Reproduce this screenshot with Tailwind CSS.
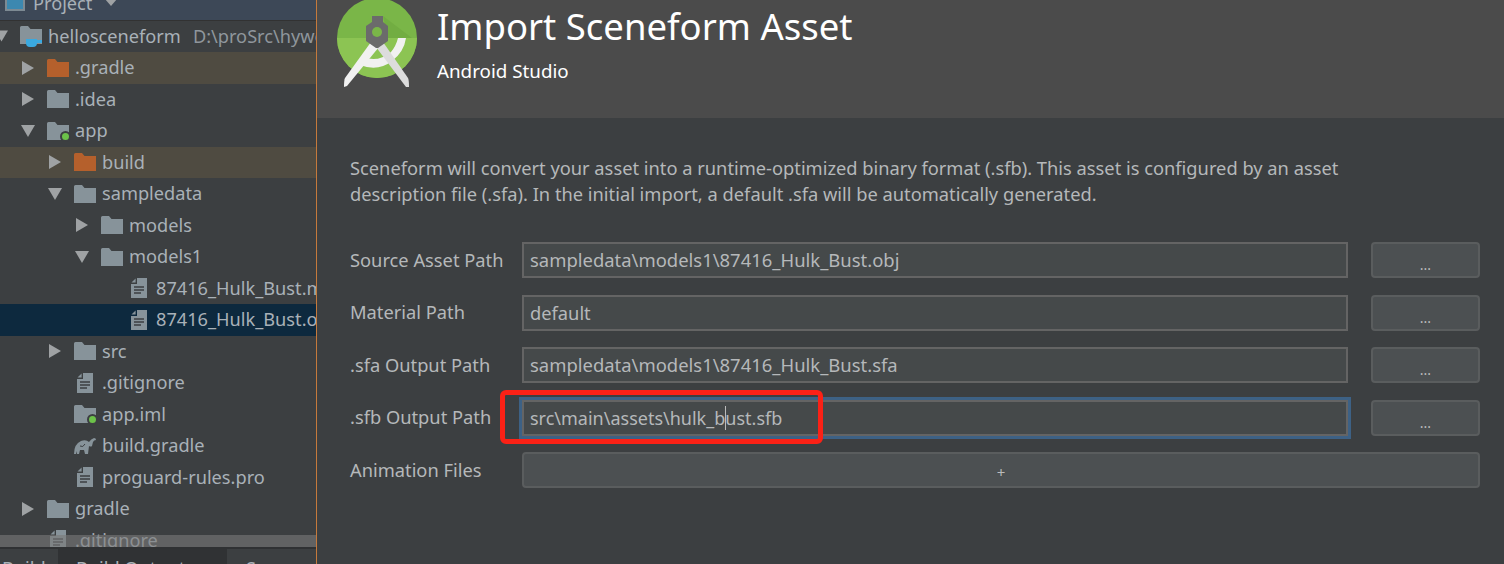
<!DOCTYPE html>
<html lang="en">
<head>
    <meta charset="UTF-8">
    <title>Import Sceneform Asset</title>
    <script src="https://cdn.jsdelivr.net/npm/@tailwindcss/browser@4"></script>
</head>
<body class="bg-[#3c3f41] overflow-hidden">
    <svg class="hidden">
        <symbol id="folder" viewBox="0 0 22 18"><path d="M0 1.5 Q0 0 1.5 0 H8 L10.5 3 H22 V18 H0 Z"/></symbol>
        <symbol id="file" viewBox="0 0 16 20">
            <path d="M6 0 H16 V20 H0 V6 H6 Z" fill="#87939a"/>
            <path d="M4.6 0.5 V4.6 H0.5 Z" fill="#87939a"/>
            <path d="M3 9 H13 M3 12 H13 M3 15 H10" stroke="#3c3f41" stroke-width="1.4" fill="none"/>
        </symbol>
        <symbol id="arrow-right" viewBox="0 0 12 14"><path d="M0 0 L12 7 L0 14 Z" fill="#9fa2a4"/></symbol>
        <symbol id="arrow-down" viewBox="0 0 14 12"><path d="M0 0 H14 L7 12 Z" fill="#9fa2a4"/></symbol>
    </svg>

    <div class="flex h-[564px] w-[1504px] font-['Noto_Sans','Open_Sans',sans-serif]">
        <!-- Project tree -->
        <aside class="relative w-[317px] shrink-0 border-r border-[#c57a3c] bg-[#3c3f41] text-[18.2px] text-[#a9b1b8] overflow-hidden">
            <div class="h-[20.5px] border-b border-[#323232] bg-[#3d4857] flex items-start overflow-hidden">
                <div class="ml-[5px] -mt-[9px] h-[20px] w-[20px] shrink-0 border-2 border-[#7d8a93] bg-[#3c88b0]"></div>
                <span class="ml-[8px] -mt-[10px] text-[#a9b1b8] leading-[26px]">Project</span>
                <svg class="ml-[13px] -mt-[1px] w-[12px] h-[7px]" viewBox="0 0 12 7"><path d="M0 0 H12 L6 7 Z" fill="#9fa2a4"/></svg>
            </div>

            <div class="flex h-[31.5px] items-center whitespace-nowrap -ml-[5px]">
                <svg class="w-[13px] h-[12px] mr-[12px] shrink-0"><use href="#arrow-down"/></svg>
                <span class="relative w-[22px] h-[20px] mr-[6px] shrink-0">
                    <svg class="w-[22px] h-[18px] fill-[#87939a]"><use href="#folder"/></svg>
                    <svg class="absolute left-[6px] top-[12px] w-[17px] h-[9px]" viewBox="0 0 17 9"><path d="M0 1 H11 V5 Q11 9 7 9 H4 Q0 9 0 5 Z M11 2 H16 V5 H11" fill="#3aa9e0"/></svg>
                </span>
                <span>hellosceneform</span><span class="ml-[12px] text-[#8f969c]">D:\proSrc\hywork\helloscene</span>
            </div>

            <div class="flex h-[31.5px] items-center whitespace-nowrap pl-[22px] bg-[#4f4b41]">
                <svg class="w-[12px] h-[14px] mr-[13px] shrink-0"><use href="#arrow-right"/></svg>
                <svg class="w-[22px] h-[18px] mr-[6px] shrink-0 fill-[#b5602c]"><use href="#folder"/></svg>
                <span>.gradle</span>
            </div>
            <div class="flex h-[31.5px] items-center whitespace-nowrap pl-[22px]">
                <svg class="w-[12px] h-[14px] mr-[13px] shrink-0"><use href="#arrow-right"/></svg>
                <svg class="w-[22px] h-[18px] mr-[6px] shrink-0 fill-[#87939a]"><use href="#folder"/></svg>
                <span>.idea</span>
            </div>
            <div class="flex h-[31.5px] items-center whitespace-nowrap pl-[21px]">
                <svg class="w-[14px] h-[12px] mr-[12px] shrink-0"><use href="#arrow-down"/></svg>
                <span class="relative w-[22px] h-[18px] mr-[6px] shrink-0">
                    <svg class="w-[22px] h-[18px] fill-[#87939a]"><use href="#folder"/></svg>
                    <span class="absolute left-[13px] top-[9px] h-[11px] w-[11px] rounded-full border-2 border-[#3c3f41] bg-[#6cc24a]"></span>
                </span>
                <span>app</span>
            </div>
            <div class="flex h-[31.5px] items-center whitespace-nowrap pl-[49px] bg-[#4f4b41]">
                <svg class="w-[12px] h-[14px] mr-[13px] shrink-0"><use href="#arrow-right"/></svg>
                <svg class="w-[22px] h-[18px] mr-[6px] shrink-0 fill-[#b5602c]"><use href="#folder"/></svg>
                <span>build</span>
            </div>
            <div class="flex h-[31.5px] items-center whitespace-nowrap pl-[48px]">
                <svg class="w-[14px] h-[12px] mr-[12px] shrink-0"><use href="#arrow-down"/></svg>
                <svg class="w-[22px] h-[18px] mr-[6px] shrink-0 fill-[#87939a]"><use href="#folder"/></svg>
                <span>sampledata</span>
            </div>
            <div class="flex h-[31.5px] items-center whitespace-nowrap pl-[76px]">
                <svg class="w-[12px] h-[14px] mr-[13px] shrink-0"><use href="#arrow-right"/></svg>
                <svg class="w-[22px] h-[18px] mr-[6px] shrink-0 fill-[#87939a]"><use href="#folder"/></svg>
                <span>models</span>
            </div>
            <div class="flex h-[31.5px] items-center whitespace-nowrap pl-[75px]">
                <svg class="w-[14px] h-[12px] mr-[12px] shrink-0"><use href="#arrow-down"/></svg>
                <svg class="w-[22px] h-[18px] mr-[6px] shrink-0 fill-[#87939a]"><use href="#folder"/></svg>
                <span>models1</span>
            </div>
            <div class="flex h-[31.5px] items-center whitespace-nowrap pl-[131px]">
                <svg class="w-[16px] h-[20px] mr-[9px] shrink-0"><use href="#file"/></svg>
                <span>87416_Hulk_Bust.mtl</span>
            </div>
            <div class="flex h-[31.5px] items-center whitespace-nowrap pl-[131px] bg-[#0d293e]">
                <svg class="w-[16px] h-[20px] mr-[9px] shrink-0"><use href="#file"/></svg>
                <span>87416_Hulk_Bust.obj</span>
            </div>
            <div class="flex h-[31.5px] items-center whitespace-nowrap pl-[49px]">
                <svg class="w-[12px] h-[14px] mr-[13px] shrink-0"><use href="#arrow-right"/></svg>
                <svg class="w-[22px] h-[18px] mr-[6px] shrink-0 fill-[#87939a]"><use href="#folder"/></svg>
                <span>src</span>
            </div>
            <div class="flex h-[31.5px] items-center whitespace-nowrap pl-[77px]">
                <svg class="w-[16px] h-[20px] mr-[9px] shrink-0"><use href="#file"/></svg>
                <span>.gitignore</span>
            </div>
            <div class="flex h-[31.5px] items-center whitespace-nowrap pl-[74px]">
                <span class="relative w-[22px] h-[18px] mr-[6px] shrink-0">
                    <svg class="w-[22px] h-[18px] fill-[#87939a]"><use href="#folder"/></svg>
                    <span class="absolute left-[13px] top-[9px] h-[11px] w-[11px] rounded-full border-2 border-[#3c3f41] bg-[#6cc24a]"></span>
                </span>
                <span>app.iml</span>
            </div>
            <div class="flex h-[31.5px] items-center whitespace-nowrap pl-[74px]">
                <svg class="w-[22px] h-[16px] mr-[6px] shrink-0" viewBox="0 0 22 16">
                    <path d="M0 16 Q0 6 7 3 Q12 1 15 4 Q17 1 20 0 Q22 0 22 2 Q20 2 19 4 L18 8 Q17 9 15 8 L14 16 H11 L10 12 H6 L5 16 H3 L2.5 13 L2 16 Z" fill="#87939a"/>
                    <path d="M6 8 Q9 10 11 6" stroke="#3c3f41" stroke-width="1" fill="none"/>
                </svg>
                <span>build.gradle</span>
            </div>
            <div class="flex h-[31.5px] items-center whitespace-nowrap pl-[77px]">
                <svg class="w-[16px] h-[20px] mr-[9px] shrink-0"><use href="#file"/></svg>
                <span>proguard-rules.pro</span>
            </div>
            <div class="flex h-[31.5px] items-center whitespace-nowrap pl-[22px]">
                <svg class="w-[12px] h-[14px] mr-[13px] shrink-0"><use href="#arrow-right"/></svg>
                <svg class="w-[22px] h-[18px] mr-[6px] shrink-0 fill-[#87939a]"><use href="#folder"/></svg>
                <span>gradle</span>
            </div>
            <div class="flex h-[31.5px] items-center whitespace-nowrap pl-[50px]">
                <svg class="w-[16px] h-[20px] mr-[9px] shrink-0"><use href="#file"/></svg>
                <span>.gitignore</span>
            </div>

            <!-- scrollbar and tool window tabs lie over the tree's last row -->
            <div class="absolute left-0 right-0 top-[535px] h-[12px] bg-[#7a7a7a]/60"></div>
            <div class="absolute left-0 right-0 top-[547px] h-[17px] flex border-t-2 border-[#2f3133] bg-[#3c3f41] overflow-hidden leading-[38px]">
                <span class="w-[58px] pl-[2px]">Build:</span>
                <span class="w-[169px] bg-[#303234] pl-[18px]">Build Output</span>
                <span class="pl-[19px]">Sync</span>
            </div>
        </aside>

        <main class="flex-1 min-w-0 flex flex-col">
            <header class="h-[118px] bg-[#4b4b4b] flex overflow-hidden">
                <svg class="w-[90px] h-[90px] ml-[15px] shrink-0" viewBox="332 0 90 90">
                    <defs><clipPath id="disc"><circle cx="377" cy="38" r="40"/></clipPath></defs>
                    <circle cx="377" cy="38" r="40" fill="#7ab648"/>
                    <path d="M383 16 L412 38 H388 Z" fill="#72ad42" clip-path="url(#disc)"/>
                    <rect x="337" y="38" width="80" height="41" fill="#8cc453" clip-path="url(#disc)"/>
                    <path d="M363 57 Q378 63 391 52 Q396 46 398 38 H406 Q404 52 392 61 Q378 72 360 65 Z" fill="#f1f1f1"/>
                    <path d="M371 42 L379 47 L347 86 L344 87 Q344 80 345 78 Z" fill="#f1f1f1"/>
                    <path d="M383 42 L376 47 L406 87 L409 87 Q409 80 408 78 Z" fill="#dcdcdc"/>
                    <path d="M372 16 H383 V22 L388 26 V41 L378 48 H376 L366 41 V26 L372 22 Z" fill="#6b6b6b"/>
                    <circle cx="377" cy="32" r="5" fill="#7ab648"/>
                </svg>
                <div class="ml-[15px] text-white">
                    <h1 class="mt-[1px] text-[36.5px] leading-[50px] whitespace-nowrap">Import Sceneform Asset</h1>
                    <p class="mt-[7px] text-[18.8px] leading-[26px]">Android Studio</p>
                </div>
            </header>

            <div class="pl-[33px] pr-[24px] text-[18.3px] text-[#b5b8ba]">
                <p class="mt-[37px] leading-[26px] w-[1020px]">Sceneform will convert your asset into a runtime-optimized binary format (.sfb). This asset is configured by an asset description file (.sfa). In the initial import, a default .sfa will be automatically generated.</p>

                <div class="mt-[35px] flex flex-col gap-[16px]">
                    <div class="flex items-center h-[36.5px]">
                        <label class="w-[172px] shrink-0 pb-[2px]">Source Asset Path</label>
                        <div class="w-[826px] h-[36px] shrink-0 border-2 border-[#646464] bg-[#45494a] pl-[6px] leading-[32px] text-[18.45px]">sampledata\models1\87416_Hulk_Bust.obj</div>
                        <button class="ml-[23px] w-[109px] h-[36px] rounded-[4px] border-2 border-[#5a5d5e] bg-[#4c5052] text-[14px] leading-[42px] text-[#bbbbbb]">...</button>
                    </div>
                    <div class="flex items-center h-[36.5px]">
                        <label class="w-[172px] shrink-0 pb-[2px]">Material Path</label>
                        <div class="w-[826px] h-[36px] shrink-0 border-2 border-[#646464] bg-[#45494a] pl-[6px] leading-[32px]">default</div>
                        <button class="ml-[23px] w-[109px] h-[36px] rounded-[4px] border-2 border-[#5a5d5e] bg-[#4c5052] text-[14px] leading-[42px] text-[#bbbbbb]">...</button>
                    </div>
                    <div class="flex items-center h-[36.5px]">
                        <label class="w-[172px] shrink-0 pb-[2px]">.sfa Output Path</label>
                        <div class="w-[826px] h-[36px] shrink-0 border-2 border-[#646464] bg-[#45494a] pl-[6px] leading-[32px] text-[18.45px]">sampledata\models1\87416_Hulk_Bust.sfa</div>
                        <button class="ml-[23px] w-[109px] h-[36px] rounded-[4px] border-2 border-[#5a5d5e] bg-[#4c5052] text-[14px] leading-[42px] text-[#bbbbbb]">...</button>
                    </div>
                    <div class="flex items-center h-[36.5px]">
                        <label class="w-[172px] shrink-0 pb-[2px]">.sfb Output Path</label>
                        <div class="relative w-[826px] h-[36px] shrink-0 border-2 border-[#646464] bg-[#45494a] pl-[6px] leading-[32px] text-[18px] outline-[3px] outline-[#3d6185]">src\main\assets\hulk_b<span class="absolute top-[4px] h-[24px] w-px bg-[#bbbbbb]"></span>ust.sfb</div>
                        <button class="ml-[23px] w-[109px] h-[36px] rounded-[4px] border-2 border-[#5a5d5e] bg-[#4c5052] text-[14px] leading-[42px] text-[#bbbbbb]">...</button>
                    </div>
                    <div class="flex items-center h-[36.5px]">
                        <label class="w-[172px] shrink-0 pb-[2px]">Animation Files</label>
                        <button class="w-[958px] h-[36px] shrink-0 rounded-[4px] border-2 border-[#5a5d5e] bg-[#4c5052] text-[15px] leading-[36px] text-[#bbbbbb]">+</button>
                    </div>
                </div>
            </div>
        </main>
    </div>

    <!-- hand-drawn annotation on the screenshot -->
    <div class="absolute left-[500px] top-[390px] h-[54px] w-[323px] rounded-[6px] border-[5px] border-[#fb2116]"></div>
</body>
</html>
